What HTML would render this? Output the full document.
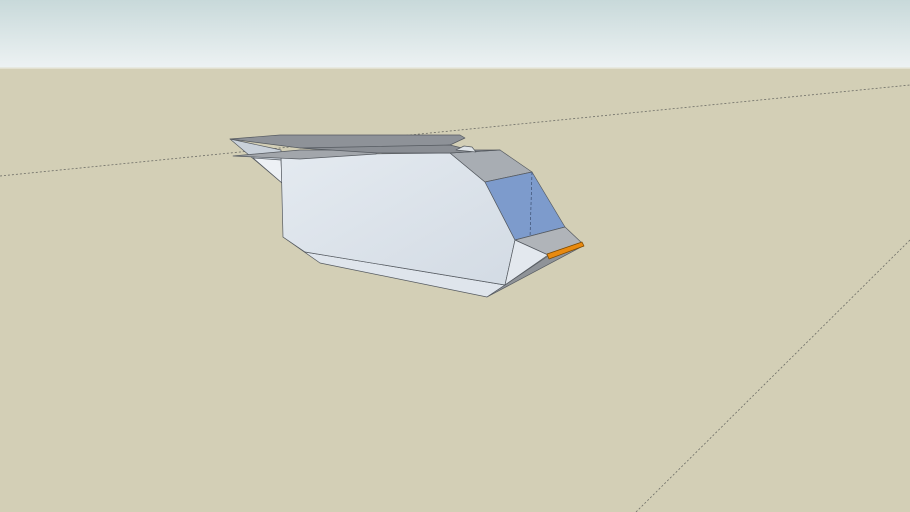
<!DOCTYPE html>
<html><head><meta charset="utf-8"><style>
html,body{margin:0;padding:0;width:910px;height:512px;overflow:hidden;background:#d3cfb6}
svg{display:block}
</style></head><body>
<svg width="910" height="512" viewBox="0 0 910 512" xmlns="http://www.w3.org/2000/svg">
<defs>
<linearGradient id="sky" x1="0" y1="0" x2="0" y2="1">
<stop offset="0" stop-color="#c8d9da"/>
<stop offset="1" stop-color="#edf2f3"/>
</linearGradient>
<linearGradient id="side" x1="0" y1="0" x2="1" y2="1">
<stop offset="0" stop-color="#e4eaf0"/>
<stop offset="1" stop-color="#d3dbe4"/>
</linearGradient>
</defs>
<rect x="0" y="0" width="910" height="68" fill="url(#sky)"/>
<rect x="0" y="67.5" width="910" height="1.5" fill="#e2e0d0"/>
<rect x="0" y="69" width="910" height="443" fill="#d3cfb6"/>
<line x1="0" y1="176" x2="910" y2="85" stroke="#6d6d66" stroke-width="0.8" stroke-dasharray="2,2"/>
<line x1="636" y1="512" x2="910" y2="240" stroke="#6d6d66" stroke-width="0.8" stroke-dasharray="2,2"/>
<g stroke="#555a60" stroke-width="0.7" stroke-linejoin="round">
<!-- rear fins -->
<polygon points="230,139 281,150 282,183" fill="#c9d1da"/>
<polygon points="253,158 281,160 282,183" fill="#edf1f5"/>
<!-- bottom strip -->
<polygon points="283,237 320,263 487,297 505,285 305,252" fill="#dfe5ec"/>
<!-- main side -->
<polygon points="281,155 450,153 485,182 515,240 505,285 305,252 283,237" fill="url(#side)"/>
<!-- roof -->
<polygon points="450,153 500,150 532,172 485,182" fill="#a8adb3"/>
<!-- window -->
<polygon points="485,182 532,172 565,227 515,240" fill="#7d9bcc"/>
<line x1="532" y1="172" x2="530" y2="238" stroke="#3c4f70" stroke-dasharray="3,2"/>
<!-- nose -->
<polygon points="515,240 565,227 583,244 548,255" fill="#b0b4b9"/>
<polygon points="515,240 548,255 505,285" fill="#e3e8ee"/>
<polygon points="505,285 548,256 583,246 487,297" fill="#8f9398"/>
<polygon points="547,254 582,242 584,246 549,259" fill="#e88a10" stroke="#7a4800"/>
<!-- wings -->
<polygon points="230,139 280,135 460,135 465,138 450,145 377,153 300,148" fill="#8e9298"/>
<polygon points="233,156 300,150 377,150 376,154 300,159" fill="#a2a6ab"/>
<polygon points="300,148 450,145 470,150 500,150 450,153 377,153" fill="#8a8e94"/>
<polygon points="456,150 464,146 472,147 476,152" fill="#dfe4e8"/>
</g>
</svg>
</body></html>
